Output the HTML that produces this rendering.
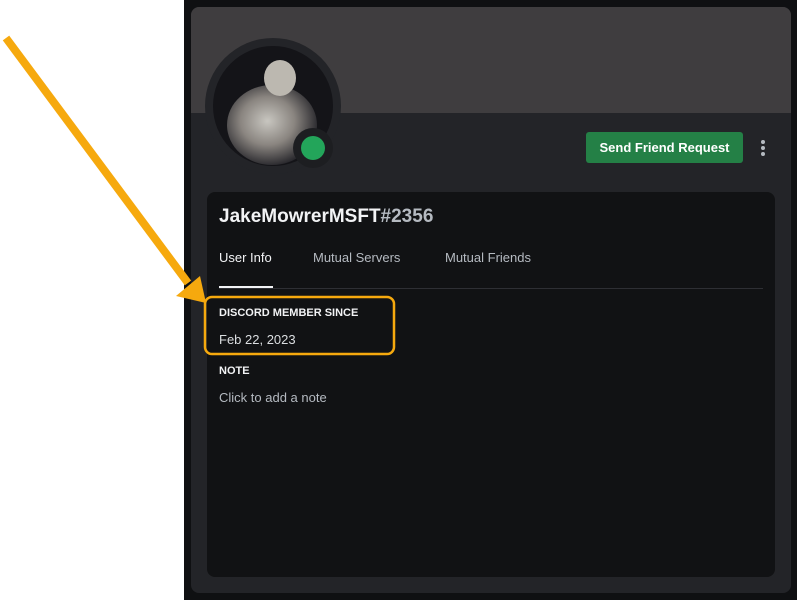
<!DOCTYPE html>
<html><head><style>
*{margin:0;padding:0;box-sizing:border-box}
body{width:797px;height:600px;background:#fff;position:relative;overflow:hidden;font-family:"Liberation Sans",sans-serif}
.bg{position:absolute;left:184px;top:0;width:613px;height:600px;background:#0f1012}
.modal{position:absolute;left:191px;top:7px;width:600px;height:586px;background:#232428;border-radius:8px;overflow:hidden}
.banner{position:absolute;left:0;top:0;width:600px;height:106px;background:#3f3d3f}
.btn{position:absolute;left:395px;top:125px;width:157px;height:31px;background:#248046;border-radius:3px;color:#fff;font-size:13px;font-weight:bold;text-align:center;line-height:31px}
.dots{position:absolute;left:570px;top:133px;width:4px}
.dots i{display:block;width:4px;height:4px;border-radius:50%;background:#b5bac1;margin-bottom:2px}
.card{position:absolute;left:16px;top:185px;width:568px;height:385px;background:#111214;border-radius:8px}
.t{position:absolute;color:#f2f3f5}
</style></head><body>
<div class="bg"></div>
<div class="modal">
 <div class="banner"></div>
 <div class="btn">Send Friend Request</div>
 <div class="dots"><i></i><i></i><i></i></div>
 <div class="card">
  <div class="t" style="left:12px;top:14px;font-size:19px;font-weight:bold">JakeMowrerMSFT<span style="color:#b5bac1">#2356</span></div>
  <div class="t" style="left:12px;top:58px;font-size:13px">User Info</div>
  <div class="t" style="left:106px;top:58px;font-size:13px;color:#b5bac1">Mutual Servers</div>
  <div class="t" style="left:238px;top:58px;font-size:13px;color:#b5bac1">Mutual Friends</div>
  <div style="position:absolute;left:12px;top:96px;width:544px;height:1px;background:#2e2f34"></div>
  <div style="position:absolute;left:12px;top:94px;width:54px;height:2px;background:#f2f3f5"></div>
  <div class="t" style="left:12px;top:115px;font-size:11px;font-weight:bold">DISCORD MEMBER SINCE</div>
  <div class="t" style="left:12px;top:140px;font-size:13px;color:#dbdee1">Feb 22, 2023</div>
  <div class="t" style="left:12px;top:173px;font-size:11px;font-weight:bold">NOTE</div>
  <div class="t" style="left:12px;top:198px;font-size:13px;color:#b5bac1">Click to add a note</div>
 </div>
</div>
<svg style="position:absolute;left:0;top:0" width="797" height="600">
 <circle cx="273" cy="106" r="68" fill="#232428"/>
 <defs><radialGradient id="g" cx="45%" cy="45%" r="60%"><stop offset="0" stop-color="#c8c6c0"/><stop offset="0.5" stop-color="#8a8580"/><stop offset="1" stop-color="#1c1c22"/></radialGradient></defs>
 <circle cx="273" cy="106" r="60" fill="#141418"/>
 <ellipse cx="272" cy="125" rx="45" ry="40" fill="url(#g)"/>
 <ellipse cx="280" cy="78" rx="16" ry="18" fill="#bcb8b0"/>
 <circle cx="313" cy="148" r="20" fill="#1d1e21"/>
 <circle cx="313" cy="148" r="12" fill="#23a55a"/>
 <rect x="205" y="297" width="189" height="57" rx="7" fill="none" stroke="#f6a90e" stroke-width="2.5"/>
 <line x1="6" y1="38" x2="188" y2="283" stroke="#f6a90e" stroke-width="8"/>
 <polygon points="206,303 176,296 200,276" fill="#f6a90e"/>
</svg>
</body></html>
